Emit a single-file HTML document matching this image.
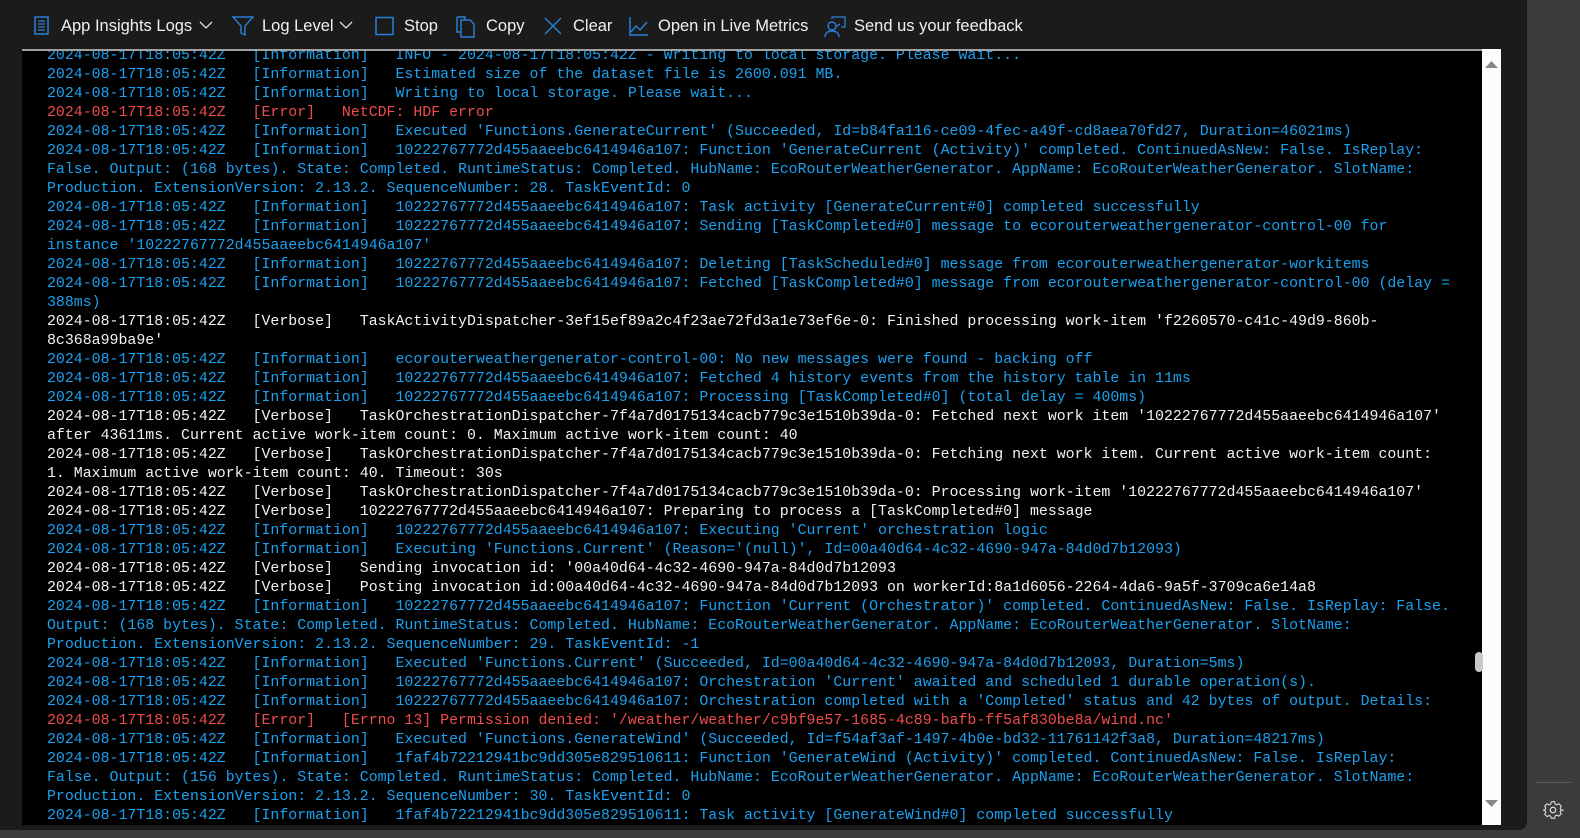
<!DOCTYPE html>
<html><head><meta charset="utf-8"><style>
html,body{margin:0;padding:0;width:1580px;height:838px;overflow:hidden;background:#3b3b3b;}
#main{position:absolute;left:0;top:0;width:1527px;height:830px;background:#1b1b1b;border-bottom-right-radius:8px;}
#tb{position:absolute;left:0;top:0;height:49px;width:1515px;font-family:"Liberation Sans",sans-serif;font-size:16.5px;color:#f0f0f0;}
.it{position:absolute;top:16px;white-space:nowrap;line-height:20px;}
.it svg{position:absolute;top:0;}
#log{position:absolute;left:22px;top:49px;width:1460px;height:776px;background:#000;border-top:2px solid #a0a0a0;box-sizing:border-box;overflow:hidden;}
pre{margin:0;position:absolute;left:25px;top:-4px;font-family:"Liberation Mono",monospace;font-size:14.9px;line-height:19px;color:#1ba1f0;white-space:pre;}
.r{color:#f14c4c}.w{color:#f2f2f2}
#sb{position:absolute;left:1482px;top:49px;width:19px;height:776px;background:#fcfcfc;}
#thumb{position:absolute;left:1475px;top:652px;width:8px;height:20px;background:#c8c8c8;border-radius:4px;}
</style></head><body>
<div id="main">
<div id="tb">
<div class="it" style="left:33px"><svg width="18" height="20" viewBox="0 0 18 20"><rect x="2" y="1" width="13" height="17" fill="none" stroke="#2a7fd8" stroke-width="1.5"/><path d="M5 5h7M5 8h7M5 11h7M5 14h7" stroke="#2a7fd8" stroke-width="1.3"/></svg><span style="margin-left:28px">App Insights Logs</span><svg style="left:166px;top:2px" width="14" height="14" viewBox="0 0 14 14"><path d="M1 4l6 6 6-6" fill="none" stroke="#ddd" stroke-width="1.3"/></svg></div>
<div class="it" style="left:232px"><svg width="22" height="20" viewBox="0 0 22 20"><path d="M1 1h20l-8 9v9l-4-2v-7z" fill="none" stroke="#2a7fd8" stroke-width="1.4"/></svg><span style="margin-left:30px">Log Level</span><svg style="left:107px;top:2px" width="14" height="14" viewBox="0 0 14 14"><path d="M1 4l6 6 6-6" fill="none" stroke="#ddd" stroke-width="1.3"/></svg></div>
<div class="it" style="left:375px"><svg width="20" height="20" viewBox="0 0 20 20"><rect x="1" y="1.5" width="17" height="17" fill="none" stroke="#2a7fd8" stroke-width="1.5"/></svg><span style="margin-left:29px">Stop</span></div>
<div class="it" style="left:456px"><svg width="20" height="22" viewBox="0 0 20 22"><path d="M1 1h8v3M1 1v15h4" fill="none" stroke="#2a7fd8" stroke-width="1.4"/><path d="M5 4h9l4 4v13H5z" fill="none" stroke="#2a7fd8" stroke-width="1.4"/></svg><span style="margin-left:30px">Copy</span></div>
<div class="it" style="left:543px"><svg width="20" height="20" viewBox="0 0 20 20"><path d="M2 2l16 16M18 2L2 18" stroke="#2a7fd8" stroke-width="1.4"/></svg><span style="margin-left:30px">Clear</span></div>
<div class="it" style="left:629px"><svg width="20" height="20" viewBox="0 0 20 20"><path d="M1 1v18h18" fill="none" stroke="#2a7fd8" stroke-width="1.5"/><path d="M2 16l5-6 4 4 7-8" fill="none" stroke="#2a7fd8" stroke-width="1.4"/></svg><span style="margin-left:29px">Open in Live Metrics</span></div>
<div class="it" style="left:824px"><svg width="22" height="22" viewBox="0 0 22 22"><path d="M8 3V1h13v10h-4" fill="none" stroke="#2a7fd8" stroke-width="1.3"/><circle cx="8" cy="10" r="4" fill="none" stroke="#2a7fd8" stroke-width="1.4"/><path d="M1 21c0-4 3-6 7-6s7 2 7 6M13 10l3-2" fill="none" stroke="#2a7fd8" stroke-width="1.4"/></svg><span style="margin-left:30px">Send us your feedback</span></div>
</div>
<div id="log"><pre>2024-08-17T18:05:42Z   [Information]   INFO - 2024-08-17T18:05:42Z - Writing to local storage. Please wait...
2024-08-17T18:05:42Z   [Information]   Estimated size of the dataset file is 2600.091 MB.
2024-08-17T18:05:42Z   [Information]   Writing to local storage. Please wait...
<span class="r">2024-08-17T18:05:42Z   [Error]   NetCDF: HDF error</span>
2024-08-17T18:05:42Z   [Information]   Executed 'Functions.GenerateCurrent' (Succeeded, Id=b84fa116-ce09-4fec-a49f-cd8aea70fd27, Duration=46021ms)
2024-08-17T18:05:42Z   [Information]   10222767772d455aaeebc6414946a107: Function 'GenerateCurrent (Activity)' completed. ContinuedAsNew: False. IsReplay:
False. Output: (168 bytes). State: Completed. RuntimeStatus: Completed. HubName: EcoRouterWeatherGenerator. AppName: EcoRouterWeatherGenerator. SlotName:
Production. ExtensionVersion: 2.13.2. SequenceNumber: 28. TaskEventId: 0
2024-08-17T18:05:42Z   [Information]   10222767772d455aaeebc6414946a107: Task activity [GenerateCurrent#0] completed successfully
2024-08-17T18:05:42Z   [Information]   10222767772d455aaeebc6414946a107: Sending [TaskCompleted#0] message to ecorouterweathergenerator-control-00 for
instance '10222767772d455aaeebc6414946a107'
2024-08-17T18:05:42Z   [Information]   10222767772d455aaeebc6414946a107: Deleting [TaskScheduled#0] message from ecorouterweathergenerator-workitems
2024-08-17T18:05:42Z   [Information]   10222767772d455aaeebc6414946a107: Fetched [TaskCompleted#0] message from ecorouterweathergenerator-control-00 (delay =
388ms)
<span class="w">2024-08-17T18:05:42Z   [Verbose]   TaskActivityDispatcher-3ef15ef89a2c4f23ae72fd3a1e73ef6e-0: Finished processing work-item 'f2260570-c41c-49d9-860b-
8c368a99ba9e'</span>
2024-08-17T18:05:42Z   [Information]   ecorouterweathergenerator-control-00: No new messages were found - backing off
2024-08-17T18:05:42Z   [Information]   10222767772d455aaeebc6414946a107: Fetched 4 history events from the history table in 11ms
2024-08-17T18:05:42Z   [Information]   10222767772d455aaeebc6414946a107: Processing [TaskCompleted#0] (total delay = 400ms)
<span class="w">2024-08-17T18:05:42Z   [Verbose]   TaskOrchestrationDispatcher-7f4a7d0175134cacb779c3e1510b39da-0: Fetched next work item '10222767772d455aaeebc6414946a107'
after 43611ms. Current active work-item count: 0. Maximum active work-item count: 40
2024-08-17T18:05:42Z   [Verbose]   TaskOrchestrationDispatcher-7f4a7d0175134cacb779c3e1510b39da-0: Fetching next work item. Current active work-item count:
1. Maximum active work-item count: 40. Timeout: 30s
2024-08-17T18:05:42Z   [Verbose]   TaskOrchestrationDispatcher-7f4a7d0175134cacb779c3e1510b39da-0: Processing work-item '10222767772d455aaeebc6414946a107'
2024-08-17T18:05:42Z   [Verbose]   10222767772d455aaeebc6414946a107: Preparing to process a [TaskCompleted#0] message</span>
2024-08-17T18:05:42Z   [Information]   10222767772d455aaeebc6414946a107: Executing 'Current' orchestration logic
2024-08-17T18:05:42Z   [Information]   Executing 'Functions.Current' (Reason='(null)', Id=00a40d64-4c32-4690-947a-84d0d7b12093)
<span class="w">2024-08-17T18:05:42Z   [Verbose]   Sending invocation id: '00a40d64-4c32-4690-947a-84d0d7b12093
2024-08-17T18:05:42Z   [Verbose]   Posting invocation id:00a40d64-4c32-4690-947a-84d0d7b12093 on workerId:8a1d6056-2264-4da6-9a5f-3709ca6e14a8</span>
2024-08-17T18:05:42Z   [Information]   10222767772d455aaeebc6414946a107: Function 'Current (Orchestrator)' completed. ContinuedAsNew: False. IsReplay: False.
Output: (168 bytes). State: Completed. RuntimeStatus: Completed. HubName: EcoRouterWeatherGenerator. AppName: EcoRouterWeatherGenerator. SlotName:
Production. ExtensionVersion: 2.13.2. SequenceNumber: 29. TaskEventId: -1
2024-08-17T18:05:42Z   [Information]   Executed 'Functions.Current' (Succeeded, Id=00a40d64-4c32-4690-947a-84d0d7b12093, Duration=5ms)
2024-08-17T18:05:42Z   [Information]   10222767772d455aaeebc6414946a107: Orchestration 'Current' awaited and scheduled 1 durable operation(s).
2024-08-17T18:05:42Z   [Information]   10222767772d455aaeebc6414946a107: Orchestration completed with a 'Completed' status and 42 bytes of output. Details:
<span class="r">2024-08-17T18:05:42Z   [Error]   [Errno 13] Permission denied: '/weather/weather/c9bf9e57-1685-4c89-bafb-ff5af830be8a/wind.nc'</span>
2024-08-17T18:05:42Z   [Information]   Executed 'Functions.GenerateWind' (Succeeded, Id=f54af3af-1497-4b0e-bd32-11761142f3a8, Duration=48217ms)
2024-08-17T18:05:42Z   [Information]   1faf4b72212941bc9dd305e829510611: Function 'GenerateWind (Activity)' completed. ContinuedAsNew: False. IsReplay:
False. Output: (156 bytes). State: Completed. RuntimeStatus: Completed. HubName: EcoRouterWeatherGenerator. AppName: EcoRouterWeatherGenerator. SlotName:
Production. ExtensionVersion: 2.13.2. SequenceNumber: 30. TaskEventId: 0
2024-08-17T18:05:42Z   [Information]   1faf4b72212941bc9dd305e829510611: Task activity [GenerateWind#0] completed successfully</pre></div>
<div id="sb"><svg style="position:absolute;left:3px;top:12px" width="13" height="8" viewBox="0 0 13 8"><path d="M0 7L6.5 0 13 7z" fill="#888"/></svg><svg style="position:absolute;left:3px;top:751px" width="13" height="8" viewBox="0 0 13 8"><path d="M0 0h13L6.5 7z" fill="#888"/></svg></div>
<div id="thumb"></div>
</div>
<div style="position:absolute;left:1536px;top:782px;width:35px;height:1px;background:#5a5a5a"></div>
<svg style="position:absolute;left:1542px;top:799px" width="22" height="22" viewBox="0 0 24 24"><path d="M10 2h4l.6 2.8 2 1 2.6-1.3 2.8 2.8-1.3 2.6 1 2L24 12.6v-1.2M10 2l-.6 2.8-2 1-2.6-1.3-2.8 2.8 1.3 2.6-1 2L0 12v0M0 12l2.3.6 1 2-1.3 2.6 2.8 2.8 2.6-1.3 2 1L10 22h4l.6-2.8 2-1 2.6 1.3 2.8-2.8-1.3-2.6 1-2L24 12" fill="none" stroke="#e0e0e0" stroke-width="1.3" transform="scale(.9) translate(1.3 1.3)"/><circle cx="12" cy="12" r="3" fill="none" stroke="#e0e0e0" stroke-width="1.3"/></svg>
</body></html>
